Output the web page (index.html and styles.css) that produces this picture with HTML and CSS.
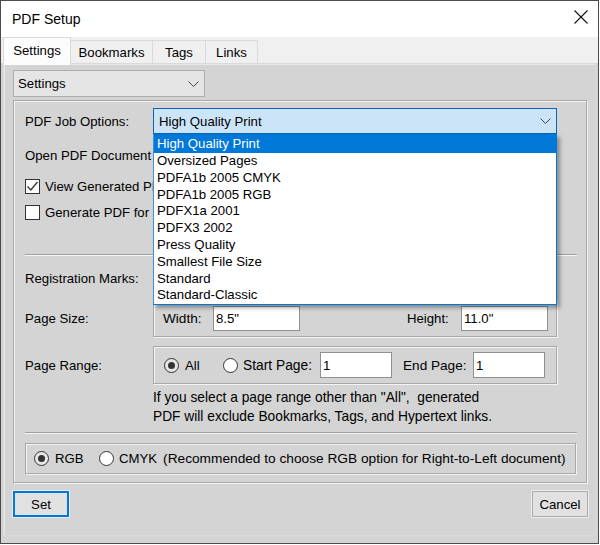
FILE: index.html
```html
<!DOCTYPE html>
<html>
<head>
<meta charset="utf-8">
<title>PDF Setup</title>
<link rel="stylesheet" href="styles.css">
</head>
<body>
<div class="window">
  <div class="titlebar">
    <span class="title">PDF Setup</span>
    <svg class="close" width="14" height="14" viewBox="0 0 14 14"><path d="M0.5 0.5 L13.5 13.5 M13.5 0.5 L0.5 13.5" stroke="#111" stroke-width="1.1" fill="none"/></svg>
  </div>
  <div class="tabs">
    <div class="tab active t1">Settings</div>
    <div class="tab t2">Bookmarks</div>
    <div class="tab t3">Tags</div>
    <div class="tab t4">Links</div>
  </div>
  <div class="panel">
    <div class="select">
      <span>Settings</span>
      <svg class="chev" width="11" height="6" viewBox="0 0 11 6"><path d="M0.5 0.5 L5.5 5.5 L10.5 0.5" stroke="#444" stroke-width="1" fill="none"/></svg>
    </div>
    <div class="group">
      <div class="row r1">
        <span class="label">PDF Job Options:</span>
        <div class="combo-wrap">
          <div class="combo">
            <span>High Quality Print</span>
            <svg class="chev" width="11" height="6" viewBox="0 0 11 6"><path d="M0.5 0.5 L5.5 5.5 L10.5 0.5" stroke="#444" stroke-width="1" fill="none"/></svg>
          </div>
          <ul class="dropdown">
            <li class="sel">High Quality Print</li>
            <li>Oversized Pages</li>
            <li>PDFA1b 2005 CMYK</li>
            <li>PDFA1b 2005 RGB</li>
            <li>PDFX1a 2001</li>
            <li>PDFX3 2002</li>
            <li>Press Quality</li>
            <li>Smallest File Size</li>
            <li>Standard</li>
            <li>Standard-Classic</li>
          </ul>
        </div>
      </div>
      <div class="row r2"><span class="label">Open PDF Document</span></div>
      <div class="row r3">
        <span class="check checked"><svg width="13" height="13" viewBox="0 0 13 13"><path d="M1.5 6.5 L4.8 10 L11.5 2" stroke="#333" stroke-width="1.3" fill="none"/></svg></span>
        <span class="ctext">View Generated PDF</span>
      </div>
      <div class="row r4">
        <span class="check"></span>
        <span class="ctext">Generate PDF for</span>
      </div>
      <div class="sep sep1"></div>
      <div class="row r5"><span class="label">Registration Marks:</span></div>
      <div class="row r6">
        <span class="label">Page Size:</span>
        <div class="box sizebox">
          <div class="pair"><span class="wlabel">Width:</span><span class="input winput">8.5"</span></div>
          <div class="pair"><span class="hlabel">Height:</span><span class="input winput">11.0"</span></div>
        </div>
      </div>
      <div class="row r7">
        <span class="label">Page Range:</span>
        <div class="box rangebox">
          <span class="opt opt-all"><span class="radio on"></span><span>All</span></span>
          <span class="opt opt-start"><span class="radio"></span><span class="wide">Start Page:</span></span>
          <span class="input pinput">1</span>
          <span class="endlabel">End Page:</span>
          <span class="input pinput">1</span>
        </div>
      </div>
      <div class="note">
        <div>If you select a page range other than "All",&nbsp; generated</div>
        <div>PDF will exclude Bookmarks, Tags, and Hypertext links.</div>
      </div>
      <div class="sep sep2"></div>
      <div class="box rgbbox">
        <span class="opt opt-rgb"><span class="radio on"></span><span>RGB</span></span>
        <span class="opt opt-cmyk"><span class="radio"></span><span>CMYK</span></span>
        <span class="rec">(Recommended to choose RGB option for Right-to-Left document)</span>
      </div>
    </div>
    <div class="buttons">
      <button class="btn default">Set</button>
      <button class="btn">Cancel</button>
    </div>
  </div>
</div>
</body>
</html>
```
FILE: styles.css
```css
* { box-sizing: border-box; }
body {
  margin: 0;
  background: #fff;
  font-family: "Liberation Sans", Arial, sans-serif;
  font-size: 13.2px;
  color: #000;
}
.window {
  width: 599px;
  height: 544px;
  border: 1px solid #4b4b4b;
  background: #d4d4d4;
  display: flex;
  flex-direction: column;
  overflow: hidden;
}
.titlebar {
  height: 36px;
  flex: none;
  background: #fff;
  display: flex;
  align-items: center;
  justify-content: space-between;
  padding: 0 10px 0 11px;
}
.title { font-size: 14px; margin-top: -1px; }
.close { display: block; margin-top: -4px; }
.tabs {
  height: 26px;
  flex: none;
  background: #f0f0f0;
  display: flex;
  align-items: flex-end;
  padding-left: 2px;
}
.tab {
  height: 23px;
  border: 1px solid #d9d9d9;
  border-bottom: none;
  background: #f0f0f0;
  display: flex;
  align-items: center;
  justify-content: center;
  margin-left: -1px;
  padding-top: 1px;
}
.tab.active {
  height: 28px;
  margin-bottom: -2px;
  background: #fcfcfc;
  position: relative;
  z-index: 1;
  margin-left: 0;
  padding-bottom: 4px;
}
.t1 { width: 68px; }
.t2 { width: 83px; }
.t3 { width: 54px; }
.t4 { width: 53px; }
.panel {
  height: 473px;
  flex: none;
  margin: 0 2px 0 2px;
  border: 1px solid #dadada;
  box-shadow: inset 1px 1px 0 #e8e8e8;
  background: #d4d4d4;
  padding: 6px 9px 0 9px;
}
.select {
  width: 192px;
  height: 27px;
  border: 1px solid #adadad;
  background: #e5e5e5;
  display: flex;
  align-items: center;
  justify-content: space-between;
  padding: 0 5px 0 4px;
}
.chev { display: block; }
.group {
  margin-top: 3px;
  width: 574px;
  border: 1px solid #a8a8a8;
  box-shadow: inset 1px 1px 0 #f4f4f4, 1px 1px 0 #f4f4f4;
  padding: 7px 0 8px 11px;
}
.row {
  display: flex;
  align-items: center;
}
.label {
  width: 128px;
  flex: none;
}
.r1 { height: 26px; }
.r2 { height: 26px; margin-top: 8px; }
.r3 { height: 20px; margin-top: 8px; }
.r4 { height: 20px; margin-top: 6px; }
.r5 { height: 26px; margin-top: 9px; }
.r6 { height: 37px; margin-top: 9px; }
.r7 { height: 38px; margin-top: 9px; }
.combo-wrap {
  position: relative;
  width: 404px;
  height: 26px;
}
.combo {
  height: 26px;
  border: 1px solid #0b64b4;
  background: #cce4f7;
  display: flex;
  align-items: center;
  justify-content: space-between;
  padding: 0 5px 0 5px;
}
.dropdown {
  position: absolute;
  top: 26px;
  left: 0;
  width: 404px;
  margin: 0;
  padding: 0;
  list-style: none;
  background: #fff;
  border: 1px solid #0078d7;
  border-top: none;
  border-left-color: #3d93dc;
  box-shadow: 3px 3px 4px rgba(0, 0, 0, 0.35);
  z-index: 5;
}
.dropdown li {
  height: 16.8px;
  line-height: 16.8px;
  padding-left: 3px;
  white-space: nowrap;
}
.dropdown li.sel {
  background: #0078d7;
  color: #fff;
  height: 19px;
  line-height: 19px;
}
.check {
  width: 15px;
  height: 15px;
  border: 1px solid #333;
  background: #fff;
  flex: none;
  display: flex;
  align-items: center;
  justify-content: center;
}
.check svg { display: block; }
.ctext { margin-left: 5px; white-space: nowrap; }
.sep {
  width: 552px;
  border-top: 1px solid #a0a0a0;
  border-bottom: 1px solid #f6f6f6;
}
.sep1 { margin-top: 32px; }
.sep2 { margin-top: 6px; }
.box {
  border: 1px solid #a8a8a8;
  box-shadow: inset 1px 1px 0 #f4f4f4, 1px 1px 0 #f4f4f4;
  display: flex;
  align-items: center;
}
.sizebox {
  width: 404px;
  height: 37px;
  justify-content: space-between;
  padding: 0 8px 0 9px;
}
.pair { display: flex; align-items: center; }
.wlabel { width: 50px; font-size: 13.6px; }
.hlabel { width: 54px; }
.input {
  height: 25px;
  border: 1px solid #8f8f8f;
  background: #fff;
  display: flex;
  align-items: center;
  padding-left: 2px;
}
.winput { width: 87px; }
.rangebox {
  width: 404px;
  height: 38px;
  padding-left: 10px;
}
.opt {
  display: flex;
  align-items: center;
  flex: none;
}
.radio {
  width: 15px;
  height: 15px;
  border-radius: 50%;
  border: 1px solid #333;
  background: #fff;
  flex: none;
  margin-right: 6px;
  position: relative;
}
.radio.on { background: #e6e6e6; }
.radio.on::after {
  content: "";
  position: absolute;
  left: 3px;
  top: 3px;
  width: 7px;
  height: 7px;
  border-radius: 50%;
  background: #333;
}
.opt-all { width: 59px; }
.opt-start { width: 97px; }
.opt-start .radio { margin-right: 5px; }
.wide { font-size: 13.8px; }
.pinput { width: 72px; height: 26px; }
.endlabel { margin-left: 11px; width: 70px; font-size: 13.6px; }
.note {
  margin-top: 4px;
  padding-left: 128px;
  line-height: 19px;
  font-size: 13.75px;
  white-space: nowrap;
}
.rgbbox {
  margin-top: 9px;
  width: 551px;
  height: 31px;
  padding-left: 8px;
}
.opt-rgb { width: 65px; }
.opt-cmyk .radio { margin-right: 5px; }
.rec { margin-left: 6px; white-space: nowrap; font-size: 13.7px; }
.buttons {
  margin-top: 8px;
  width: 575px;
  display: flex;
  justify-content: space-between;
}
.btn {
  width: 56px;
  height: 26px;
  font-family: "Liberation Sans", Arial, sans-serif;
  font-size: 13.2px;
  color: #000;
  background: #e1e1e1;
  border: 1px solid #adadad;
  box-shadow: 0 0 0 1px #ececec;
  padding: 0;
  margin: 0;
}
.btn.default {
  border: 2px solid #0078d7;
}
```
